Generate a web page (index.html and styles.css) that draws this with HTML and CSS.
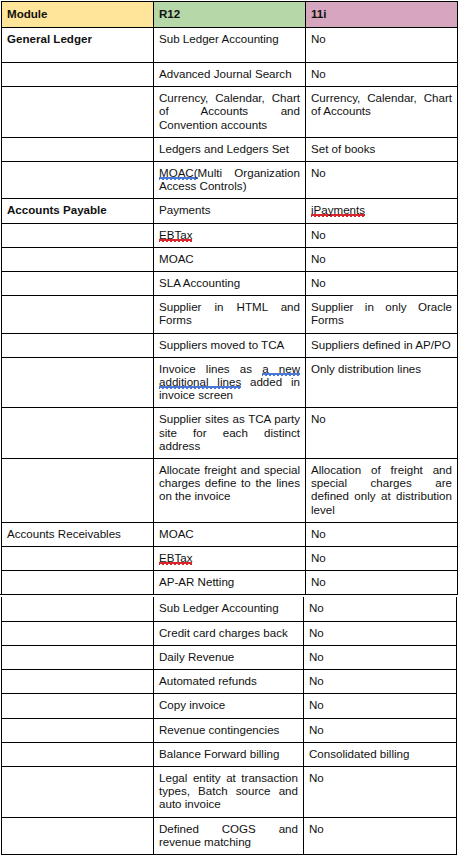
FILE: index.html
```html
<!DOCTYPE html>
<html lang="en">
<head>
<meta charset="utf-8">
<title>R12 vs 11i</title>
<link rel="stylesheet" href="styles.css">
</head>
<body>
<table class="cmp cmp-top">
  <tr class="head">
    <th class="c-mod">Module</th>
    <th class="c-r12">R12</th>
    <th class="c-11i">11i</th>
  </tr>
  <tr class="gl">
    <td class="mod strong">General Ledger</td>
    <td>Sub Ledger Accounting</td>
    <td>No</td>
  </tr>
  <tr>
    <td class="mod"></td>
    <td>Advanced Journal Search</td>
    <td>No</td>
  </tr>
  <tr>
    <td class="mod"></td>
    <td>Currency, Calendar, Chart of Accounts and Convention accounts</td>
    <td>Currency, Calendar, Chart of Accounts</td>
  </tr>
  <tr>
    <td class="mod"></td>
    <td>Ledgers and Ledgers Set</td>
    <td>Set of books</td>
  </tr>
  <tr>
    <td class="mod"></td>
    <td><span class="gram">MOAC(</span><span>Multi Organization</span> <span>Access Controls)</span></td>
    <td>No</td>
  </tr>
  <tr>
    <td class="mod strong">Accounts Payable</td>
    <td>Payments</td>
    <td><span class="spell">iPayments</span></td>
  </tr>
  <tr>
    <td class="mod"></td>
    <td><span class="spell">EBTax</span></td>
    <td>No</td>
  </tr>
  <tr>
    <td class="mod"></td>
    <td>MOAC</td>
    <td>No</td>
  </tr>
  <tr>
    <td class="mod"></td>
    <td>SLA Accounting</td>
    <td>No</td>
  </tr>
  <tr>
    <td class="mod"></td>
    <td>Supplier in HTML and Forms</td>
    <td>Supplier in only Oracle Forms</td>
  </tr>
  <tr>
    <td class="mod"></td>
    <td>Suppliers moved to TCA</td>
    <td>Suppliers defined in AP/PO</td>
  </tr>
  <tr>
    <td class="mod"></td>
    <td><span>Invoice lines as</span> <span class="gram">a new</span> <span class="gram">additional lines</span> <span>added in</span> <span>invoice screen</span></td>
    <td>Only distribution lines</td>
  </tr>
  <tr>
    <td class="mod"></td>
    <td>Supplier sites as TCA party site for each distinct address</td>
    <td>No</td>
  </tr>
  <tr>
    <td class="mod"></td>
    <td>Allocate freight and special charges define to the lines on the invoice</td>
    <td>Allocation of freight and special charges are defined only at distribution level</td>
  </tr>
  <tr>
    <td class="mod">Accounts Receivables</td>
    <td>MOAC</td>
    <td>No</td>
  </tr>
  <tr>
    <td class="mod"></td>
    <td><span class="spell">EBTax</span></td>
    <td>No</td>
  </tr>
  <tr class="last">
    <td class="mod"></td>
    <td>AP-AR Netting</td>
    <td>No</td>
  </tr>
</table>
<div class="page-break"></div>
<table class="cmp cmp-bottom">
  <tr>
    <td class="mod"></td>
    <td>Sub Ledger Accounting</td>
    <td>No</td>
  </tr>
  <tr>
    <td class="mod"></td>
    <td>Credit card charges back</td>
    <td>No</td>
  </tr>
  <tr>
    <td class="mod"></td>
    <td>Daily Revenue</td>
    <td>No</td>
  </tr>
  <tr>
    <td class="mod"></td>
    <td>Automated refunds</td>
    <td>No</td>
  </tr>
  <tr>
    <td class="mod"></td>
    <td>Copy invoice</td>
    <td>No</td>
  </tr>
  <tr>
    <td class="mod"></td>
    <td>Revenue contingencies</td>
    <td>No</td>
  </tr>
  <tr>
    <td class="mod"></td>
    <td>Balance Forward billing</td>
    <td>Consolidated billing</td>
  </tr>
  <tr>
    <td class="mod"></td>
    <td>Legal entity at transaction types, Batch source and auto invoice</td>
    <td>No</td>
  </tr>
  <tr>
    <td class="mod"></td>
    <td>Defined COGS and revenue matching</td>
    <td>No</td>
  </tr>
</table>
</body>
</html>
```

FILE: styles.css
```css
html,
body {
  margin: 0;
  padding: 0;
  background: #ffffff;
}

body {
  padding: 1px 0 0 1px;
  font-family: "Liberation Sans", Arial, sans-serif;
  font-size: 11.58px;
  line-height: 13.2px;
  color: #111111;
}

.cmp {
  border-collapse: separate;
  border-spacing: 0;
  table-layout: fixed;
  width: 457px;
  border-left: 1px solid #000000;
}

.cmp-top {
  border-top: 1px solid #000000;
}

.cmp td,
.cmp th {
  box-sizing: border-box;
  width: 152px;
  padding: 5px;
  border-right: 1px solid #000000;
  border-bottom: 1px solid #000000;
  text-align: justify;
  vertical-align: top;
  font-weight: normal;
}

.cmp th {
  text-align: left;
  font-weight: bold;
  padding: 6px 5px 5.8px;
}

.c-mod { background: #ffe599; }
.c-r12 { background: #b6d7a8; }
.c-11i { background: #d5a6bd; }

.cmp td.strong {
  font-weight: bold;
  text-align: left;
}

.cmp td.mod {
  text-align: left;
}

.gl td {
  padding-bottom: 15.8px;
}

.last td {
  border-bottom: none;
}

.cmp-bottom {
  width: 456px;
}

.cmp-bottom td:nth-child(2) {
  width: 150px;
}

.cmp-bottom td:nth-child(3) {
  width: 153px;
}

.page-break {
  width: 458px;
  height: 1px;
  margin: 0 0 2px -1px;
  background: #000000;
}

.spell,
.gram {
  --squiggle: #d8262c;
  padding-bottom: 2px;
  background-image:
    linear-gradient(45deg, transparent 62%, var(--squiggle) 62%, var(--squiggle) 88%, transparent 88%),
    linear-gradient(135deg, transparent 12%, var(--squiggle) 12%, var(--squiggle) 38%, transparent 38%);
  background-size: 4px 4px;
  background-repeat: repeat-x;
  background-position: 0 100%;
}

.gram {
  --squiggle: #4a78d8;
}
```
